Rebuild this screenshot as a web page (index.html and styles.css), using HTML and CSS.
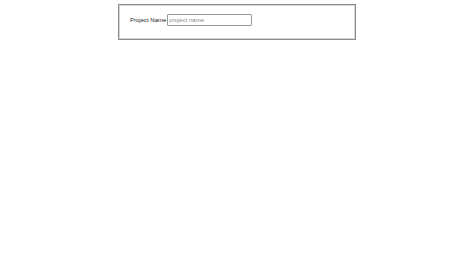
FILE: index.html
```html
<!DOCTYPE html>
<html lang="en">
<head>
    <meta charset="UTF-8">
    <meta name="viewport" content="width=device-width, initial-scale=1.0">
    <title>Project</title>
    <link rel="stylesheet" href="styles.css">
</head>
<body>
    <div class="project-container">
        <form class="project-form">
            <label for="project-name">Project Name</label>
            <input type="text" id="project-name" placeholder="project name">
        </form>
    </div>
</body>
</html>
```

FILE: styles.css
```css
body {
    margin: 0;
    font-family: 'Liberation Sans', Arial, sans-serif;
    background: #ffffff;
    color: #222222;
}

.project-container {
    width: 238px;
    box-sizing: border-box;
    margin: 4px auto 0;
    padding: 9px 11px 13px;
    border: 1px solid #8c8c8c;
    box-shadow: inset 0 0 0 1px #d4d4d4;
}

.project-form {
    display: flex;
    align-items: center;
    gap: 1px;
    height: 12px;
}

label {
    font-size: 6px;
    color: #1a1a1a;
}

input {
    width: 85px;
    height: 12px;
    box-sizing: border-box;
    margin: 0;
    padding: 0 1px;
    border: 1px solid #9a9a9a;
    border-radius: 1px;
    font-family: 'Liberation Sans', Arial, sans-serif;
    font-size: 6px;
    color: #222222;
}

input::placeholder {
    color: #8a8a8a;
}
```
